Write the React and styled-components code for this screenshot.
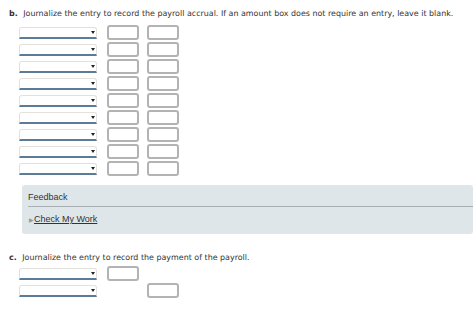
import styled, { createGlobalStyle } from "styled-components";

const Global = createGlobalStyle`
  body {
    margin: 0;
    background: #fff;
    font-family: "DejaVu Sans", Verdana, sans-serif;
    color: #333;
  }
`;

const Page = styled.div`
  padding: 8px 0 0 9px;
`;

const Title = styled.div`
  font-size: 7.95px;
  line-height: 12px;
  height: 12px;
  white-space: nowrap;
  color: #333;
  >b{
    font-weight: bold;
    margin-right: 3px;
  }
`;

const Rows = styled.div`
  display: flex;
  flex-direction: column;
  padding-left: 10px;
  margin-top: ${(p) => p.$top}px;
`;

const Row = styled.div`
  display: flex;
  align-items: center;
  height: 17px;
`;

const Select = styled.div`
  position: relative;
  width: 76px;
  height: 9px;
  margin-right: 10px;
  border: 1px solid #e4e1dc;
  border-bottom: 2px solid #5b7b96;
  border-radius: 3px 3px 0 0;
  box-sizing: content-box;
  &::after{
    content: "";
    position: absolute;
    right: 1px;
    top: 3px;
    border-left: 2.5px solid transparent;
    border-right: 2.5px solid transparent;
    border-top: 3px solid #222;
  }
`;

const Box = styled.div`
  width: 28px;
  height: 11px;
  margin-right: 8px;
  border: 2px solid #b3b3b3;
  border-radius: 3px;
  background: #fff;
  visibility: ${(p) => (p.$blank ? "hidden" : "visible")};
`;

const Feedback = styled.div`
  margin: 8px 1px 0 13px;
  background: #dfe6e9;
  border-radius: 3px;
  height: 49px;
  padding: 0 0 0 6px;
  font-family: "Liberation Sans", Arial, sans-serif;
  font-size: 9px;
  color: #333;
`;

const FeedbackHead = styled.div`
  height: 21px;
  line-height: 24px;
  border-bottom: 1px solid #a9b1b4;
`;

const CheckLink = styled.div`
  height: 24px;
  line-height: 24px;
  padding-left: 1px;
  >span{
    text-decoration: underline;
    color: #333;
  }
  >i{
    font-style: normal;
    font-size: 6px;
    color: #999;
  }
`;

const SectionTitle = styled(Title)`
  margin-top: 18px;
`;

const App = () => {
  const rows = Array.from({ length: 9 });
  return (
    <Page>
      <Global />
      <Title>
        <b>b.</b> Journalize the entry to record the payroll accrual. If an amount box does not require an entry, leave it blank.
      </Title>
      <Rows $top={4}>
        {rows.map((_, i) => (
          <Row key={i}>
            <Select />
            <Box />
            <Box />
          </Row>
        ))}
      </Rows>
      <Feedback>
        <FeedbackHead>Feedback</FeedbackHead>
        <CheckLink><i>▶</i><span>Check My Work</span></CheckLink>
      </Feedback>
      <SectionTitle>
        <b>c.</b> Journalize the entry to record the payment of the payroll.
      </SectionTitle>
      <Rows $top={1}>
        <Row>
          <Select />
          <Box />
          <Box $blank />
        </Row>
        <Row>
          <Select />
          <Box $blank />
          <Box />
        </Row>
      </Rows>
    </Page>
  );
};

export default App;
